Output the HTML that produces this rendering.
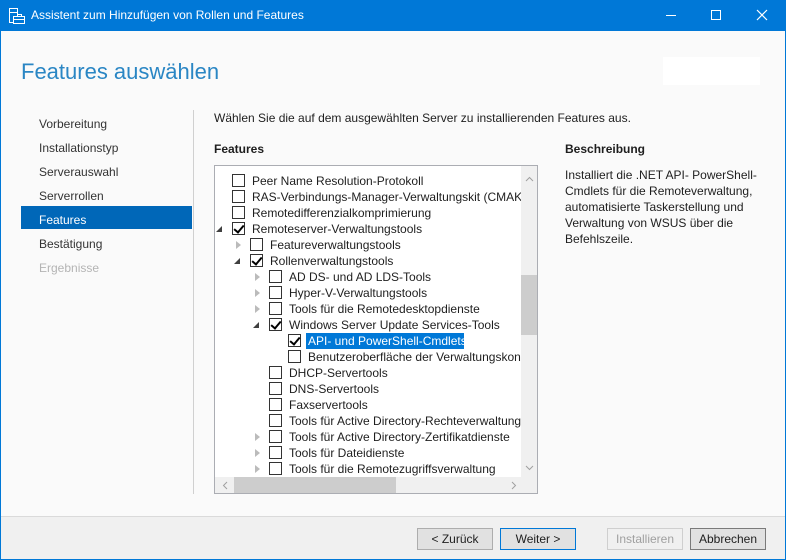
<!DOCTYPE html>
<html><head><meta charset="utf-8"><style>
*{margin:0;padding:0;box-sizing:border-box}
body{width:786px;height:560px;overflow:hidden;font-family:"Liberation Sans",sans-serif;font-size:12px;color:#1e1e1e;background:#0078d7;position:relative}
.win{position:absolute;left:1px;top:31px;width:784px;height:528px;background:#fafafa}
.abs{position:absolute;white-space:nowrap}
.title{position:absolute;left:31px;top:8px;color:#fff;font-size:12px}
.nav{position:absolute;left:38px;color:#333}
.btn{position:absolute;top:528px;height:22px;width:76px;border:1px solid #adadad;background:#e1e1e1;text-align:center;line-height:20px;font-size:12px}
.tree{position:absolute;left:214px;top:165px;width:324px;height:329px;border:1px solid #abadb3;background:#fff;overflow:hidden}
.row{position:absolute;height:16px;white-space:nowrap;line-height:16px}
.cb{position:absolute;width:13px;height:13px;border:1px solid #333;background:#fff;top:1px}
.cb.c::after{content:"";position:absolute;left:3px;top:0px;width:4px;height:8px;border:solid #000;border-width:0 2px 2px 0;transform:rotate(40deg)}
.ex{position:absolute;width:0;height:0;border-left:5px solid #a0a0a0;border-top:4px solid transparent;border-bottom:4px solid transparent;top:4px}
.ex.ex2{border:none;border-right:6px solid #404040;border-top:6px solid transparent;top:5px}
.ex.hollow{border-left-color:#bbb}
</style></head><body>
<svg class="abs" style="left:8px;top:7px" width="18" height="18" viewBox="0 0 18 18" fill="none" stroke="#fff" stroke-width="1"><rect x="1.5" y="1.5" width="8" height="14"/><line x1="1.5" y1="5.5" x2="9.5" y2="5.5"/><rect x="5.5" y="9.5" width="11" height="7" fill="#0078d7"/><path d="M9.5 9.5v-2h4v2M5.5 12.5h11"/></svg>
<div class="title">Assistent zum Hinzufügen von Rollen und Features</div>
<div class="abs" style="left:666px;top:15px;width:10px;height:1px;background:#fff"></div>
<div class="abs" style="left:711px;top:10px;width:10px;height:10px;border:1px solid #fff"></div>
<svg class="abs" style="left:756px;top:9px" width="12" height="12"><path d="M1 1L11 11M11 1L1 11" stroke="#fff" stroke-width="1.2"/></svg>
<div class="win">
<div class="abs" style="left:20px;top:28px;font-size:22px;color:#2a86c4">Features auswählen</div>
<div class="abs" style="left:662px;top:26px;width:97px;height:28px;background:#fff"></div>
<div class="nav" style="top:86px">Vorbereitung</div>
<div class="nav" style="top:110px">Installationstyp</div>
<div class="nav" style="top:134px">Serverauswahl</div>
<div class="nav" style="top:158px">Serverrollen</div>
<div class="abs" style="left:20px;top:175px;width:171px;height:23px;background:#0067b8"></div>
<div class="nav" style="top:182px;color:#fff">Features</div>
<div class="nav" style="top:206px">Bestätigung</div>
<div class="nav" style="top:230px;color:#b4b4b4">Ergebnisse</div>
<div class="abs" style="left:192px;top:79px;width:1px;height:384px;background:#d0d0d0"></div>
<div class="abs" style="left:213px;top:80px">Wählen Sie die auf dem ausgewählten Server zu installierenden Features aus.</div>
<div class="abs" style="left:213px;top:111px;font-weight:bold">Features</div>
<div class="abs" style="left:564px;top:111px;font-weight:bold">Beschreibung</div>
<div class="abs" style="left:564px;top:136px;line-height:16px;white-space:normal;width:210px">Installiert die .NET API- PowerShell-<br>Cmdlets für die Remoteverwaltung,<br>automatisierte Taskerstellung und<br>Verwaltung von WSUS über die<br>Befehlszeile.</div>
<div class="abs" style="left:0;top:485px;width:784px;height:43px;background:#f0f0f0;border-top:1px solid #dadada"></div>
</div>
<div class="tree">
<div id="rows"></div>
<div class="abs" style="left:306px;top:0;width:17px;height:311px;background:#f0f0f0"></div>
<div class="abs" style="left:306px;top:109px;width:17px;height:60px;background:#cdcdcd"></div>
<svg class="abs" style="left:310px;top:10px" width="9" height="6"><path d="M1 5L4.5 1.5L8 5" stroke="#a0a0a0" fill="none"/></svg>
<svg class="abs" style="left:310px;top:299px" width="9" height="6"><path d="M1 1L4.5 4.5L8 1" stroke="#a0a0a0" fill="none"/></svg>
<div class="abs" style="left:0;top:311px;width:323px;height:17px;background:#f0f0f0"></div>
<div class="abs" style="left:19px;top:311px;width:162px;height:17px;background:#cdcdcd"></div>
<svg class="abs" style="left:7px;top:315px" width="6" height="9"><path d="M5 1L1.5 4.5L5 8" stroke="#a0a0a0" fill="none"/></svg>
<svg class="abs" style="left:296px;top:315px" width="6" height="9"><path d="M1 1L4.5 4.5L1 8" stroke="#a0a0a0" fill="none"/></svg>
</div>
<div class="btn" style="left:417px">&lt; Zurück</div>
<div class="btn" style="left:500px;border:1px solid #0078d7">Weiter &gt;</div>
<div class="btn" style="left:607px;color:#a0a0a0;background:#f0f0f0;border-color:#cfcfcf">Installieren</div>
<div class="btn" style="left:690px;border-color:#7a7a7a">Abbrechen</div>
<script>
var R=[[0,'','Peer Name Resolution-Protokoll',0],[0,'','RAS-Verbindungs-Manager-Verwaltungskit (CMAK)',0],[0,'','Remotedifferenzialkomprimierung',0],[0,'e','Remoteserver-Verwaltungstools',1],[1,'c','Featureverwaltungstools',0],[1,'e','Rollenverwaltungstools',1],[2,'c','AD DS- und AD LDS-Tools',0],[2,'c','Hyper-V-Verwaltungstools',0],[2,'c','Tools für die Remotedesktopdienste',0],[2,'e','Windows Server Update Services-Tools',1],[3,'','API- und PowerShell-Cmdlets',1,1],[3,'','Benutzeroberfläche der Verwaltungskonsole',0],[2,'','DHCP-Servertools',0],[2,'','DNS-Servertools',0],[2,'','Faxservertools',0],[2,'','Tools für Active Directory-Rechteverwaltung',0],[2,'c','Tools für Active Directory-Zertifikatdienste',0],[2,'c','Tools für Dateidienste',0],[2,'c','Tools für die Remotezugriffsverwaltung',0]];
var X=[17,35,54,73],h='';
R.forEach(function(r,i){var t=7+16*i,x=X[r[0]];
h+='<div class="row" style="top:'+t+'px;left:0;width:306px">';
if(r[1]=='c')h+='<div class="ex hollow" style="left:'+(x-14)+'px"></div>';
if(r[1]=='e')h+='<div class="ex ex2" style="left:'+(x-16)+'px"></div>';
h+='<div class="cb'+(r[3]?' c':'')+'" style="left:'+x+'px"></div>';
if(r[4])h+='<div style="position:absolute;left:'+(x+18)+'px;top:0;height:16px;width:158px;background:#0078d7"></div>';
h+='<div style="position:absolute;left:'+(x+20)+'px;top:0;'+(r[4]?'color:#fff':'')+'">'+r[2]+'</div></div>';});
document.getElementById('rows').innerHTML=h;
</script>
</body></html>
